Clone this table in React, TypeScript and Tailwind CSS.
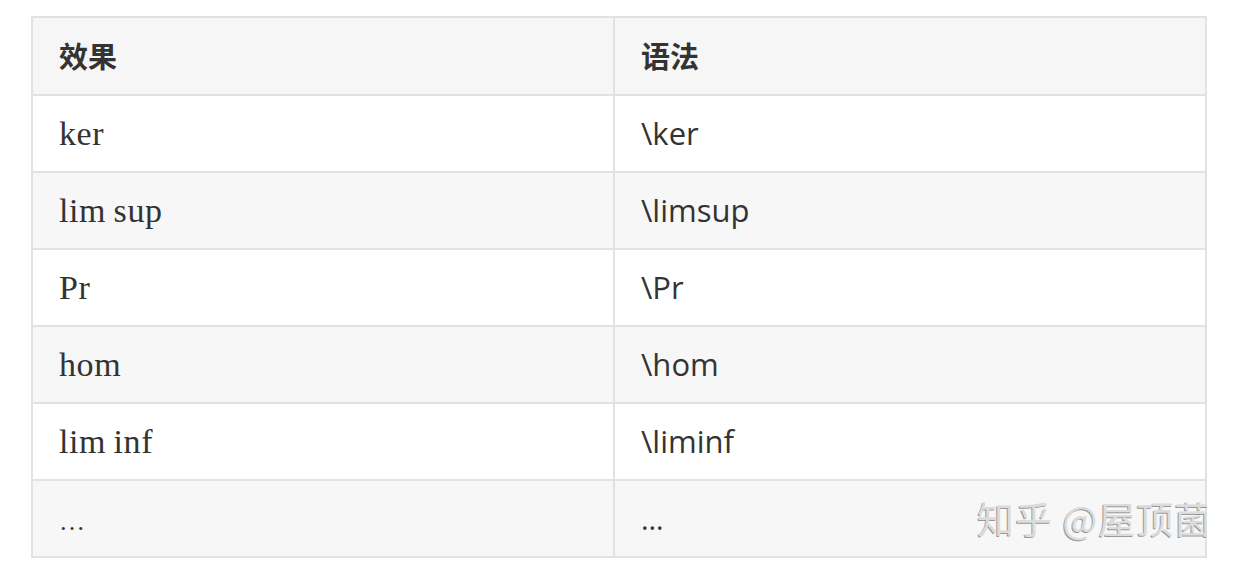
import React from "react";

type Row = { math: string; syntax: string };

const ROWS: Row[] = [
  { math: "ker", syntax: "\\ker" },
  { math: "lim\u2009sup", syntax: "\\limsup" },
  { math: "Pr", syntax: "\\Pr" },
  { math: "hom", syntax: "\\hom" },
  { math: "lim\u2009inf", syntax: "\\liminf" },
  { math: "\u2026", syntax: "\u2026" },
];

const SANS = "font-['Open_Sans','Noto_Sans','Noto_Sans_CJK_SC',sans-serif]";
const SERIF = "font-['Liberation_Serif','Times_New_Roman',serif]";

export default function App() {
  return (
    <div className="min-h-[574px] w-[1240px] bg-white pl-[31px] pt-[16px]">
      <div className="relative w-[1176px] overflow-hidden">
        <table className="w-[1176px] table-fixed border-collapse text-[#333]">
          <colgroup>
            <col className="w-[582px]" />
            <col />
          </colgroup>
          <thead>
            <tr className="h-[78px] bg-[#f6f6f6]">
              <th className="border-2 border-[#e2e2e2] pl-[26px] text-left align-middle font-['Noto_Sans_CJK_SC',sans-serif] text-[29px] font-bold">
                效果
              </th>
              <th className="border-2 border-[#e2e2e2] pl-[26px] text-left align-middle font-['Noto_Sans_CJK_SC',sans-serif] text-[29px] font-bold">
                语法
              </th>
            </tr>
          </thead>
          <tbody>
            {ROWS.map((row, i) => (
              <tr
                key={row.syntax}
                className={i % 2 === 1 ? "h-[77px] bg-[#f7f7f7]" : "h-[77px] bg-white"}
              >
                <td className={`border-2 border-[#e2e2e2] pl-[26px] align-middle text-[34px] tracking-[0.6px] ${SERIF}`}>
                  {i === 5 ? <span className="text-[26px]">{row.math}</span> : row.math}
                </td>
                <td className={`border-2 border-[#e2e2e2] pl-[26px] align-middle text-[31px] ${SANS}`}>
                  {i === 5 ? <span className="text-[29px]">{row.syntax}</span> : row.syntax}
                </td>
              </tr>
            ))}
          </tbody>
        </table>
        <div className="pointer-events-none absolute bottom-[12px] left-[946px] whitespace-nowrap font-['Noto_Sans_CJK_SC',sans-serif] text-[37px] tracking-[1px] text-[#dcdcdc] [text-shadow:-1px_1px_0_#999]">
          知乎 @屋顶菌
        </div>
      </div>
    </div>
  );
}
